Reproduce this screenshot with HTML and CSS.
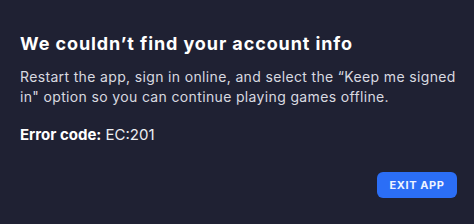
FILE: index.html
```html
<!DOCTYPE html>
<html>
<head>
	<meta charset="UTF-8">
	<title>Account info</title>
	<link rel="stylesheet" href="styles.css">
</head>
<body>
	<div class="dialog">
		<h1 class="title">We couldn’t find your account info</h1>
		<p class="message">Restart the app, sign in online, and select the “Keep me signed in" option so you can continue playing games offline.</p>
		<p class="code"><b>Error code:</b> EC:201</p>
		<div class="actions">
			<button type="button" class="exit">EXIT APP</button>
		</div>
	</div>
</body>
</html>
```
FILE: styles.css
```css
body {
	margin: 0;
	background-color: #1f2133;
	font-family: Inter, "Noto Sans", sans-serif;
}

.dialog {
	width: 474px;
	height: 224px;
	box-sizing: border-box;
	padding: 32px 17px 0 20px;
	color: #e6e7eb;
}

.title {
	margin: 0;
	font-size: 18px;
	font-weight: 700;
	line-height: 24px;
	letter-spacing: 0.9px;
	color: #ffffff;
}

.message {
	margin: 11px 0 0;
	font-size: 14px;
	line-height: 20px;
	letter-spacing: 0.35px;
	color: #d9dae0;
}

.code {
	margin: 18px 0 0;
	font-size: 15px;
	line-height: 20px;
	color: #eceef2;
}

.code b {
	font-weight: 700;
	color: #ffffff;
}

.actions {
	display: flex;
	justify-content: flex-end;
	margin-top: 27px;
}

.exit {
	width: 80px;
	height: 26px;
	font-family: inherit;
	font-size: 11px;
	font-weight: 700;
	letter-spacing: 0.6px;
	color: #eef3ff;
	background-color: #2b6ef6;
	border: none;
	border-radius: 6px;
	cursor: pointer;
}
```
